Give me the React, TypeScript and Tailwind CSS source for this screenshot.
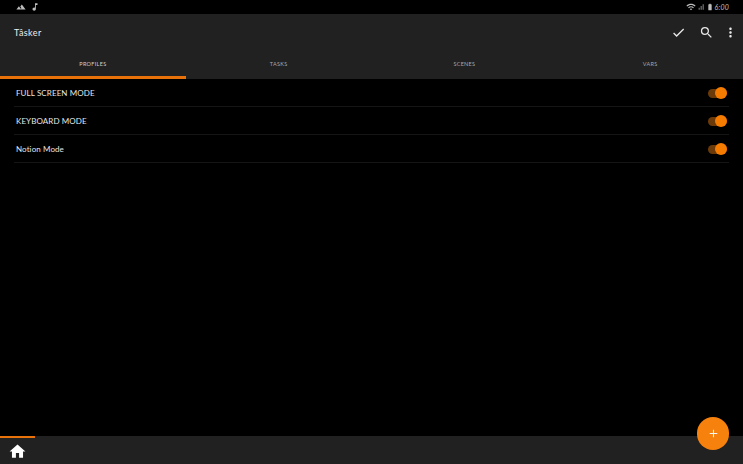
import React from 'react';
import { MdCheck, MdSearch, MdMoreVert, MdHome, MdAdd, MdWifi, MdSignalCellularAlt, MdBatteryFull, MdLandscape, MdMusicNote } from 'react-icons/md';

const font = "font-['Lato','Noto_Sans',sans-serif]";

const tabs = ['PROFILES', 'TASKS', 'SCENES', 'VARS'];
const profiles = ['FULL SCREEN MODE', 'KEYBOARD MODE', 'Notion Mode'];

const Toggle = () => (
  <div className="relative w-[19px] h-[9px] mt-[2px] rounded-full bg-[#6b3a08]">
    <div className="absolute right-0 top-[-2px] w-[12px] h-[12px] rounded-full bg-[#f57c00]" />
  </div>
);

const App: React.FC = () => {
  return (
    <div className={`relative flex flex-col w-[743px] h-[464px] overflow-hidden bg-black ${font}`}>
      {/* status bar */}
      <div className="h-[14px] shrink-0 flex items-center justify-between pl-[16px] pr-[14px] text-[#bdbdbd]">
        <div className="flex items-center gap-[4px]">
          <MdLandscape size={10} />
          <MdMusicNote size={10} />
        </div>
        <div className="flex items-center gap-[1px]">
          <MdWifi size={10} />
          <MdSignalCellularAlt size={8} className="text-[#8a8a8a]" />
          <MdBatteryFull size={8} />
          <span className="text-[7px] leading-none italic tracking-[0.2px]">6:00</span>
        </div>
      </div>

      {/* toolbar */}
      <div className="h-[36px] shrink-0 bg-[#212121] flex items-center justify-between pl-[14px] pr-[5px]">
        <span className="text-[9px] text-[#eeeeee] tracking-[0.4px] mt-[1px]">Tâsker</span>
        <div className="flex items-center text-[#e8e8e8]">
          <MdCheck size={15} className="mr-[13px]" />
          <MdSearch size={15} className="mr-[9px]" />
          <MdMoreVert size={15} />
        </div>
      </div>

      {/* tabs */}
      <div className="h-[29px] shrink-0 bg-[#212121] grid grid-cols-4">
        {tabs.map((t, i) => (
          <div
            key={t}
            className={`flex items-center justify-center pt-[2px] border-b-[3px] text-[5.5px] tracking-[0.3px] ${
              i === 0 ? 'border-[#e8710a] text-[#cfcfcf]' : 'border-transparent text-[#a8a8a8]'
            }`}
          >
            {t}
          </div>
        ))}
      </div>

      {/* profile list */}
      <div className="flex-1 px-[14px]">
        {profiles.map(p => (
          <div key={p} className="h-[28px] flex items-center justify-between border-b border-[#151515] pl-[2px] pr-[2px]">
            <span className="text-[8px] text-[#e6e6e6] tracking-[0.1px]">{p}</span>
            <Toggle />
          </div>
        ))}
      </div>

      {/* bottom bar */}
      <div className="h-[28px] shrink-0 bg-[#212121]">
        <div className="w-[35px] h-[2px] bg-[#e8710a]" />
        <div className="pl-[8px] pt-[4px]">
          <MdHome size={19} className="text-white" />
        </div>
      </div>

      {/* fab */}
      <div className="absolute left-[697px] top-[417px] w-[32px] h-[33px] rounded-full bg-[#f7810d] flex items-center justify-center text-[#f5f5f5]">
        <MdAdd size={13} />
      </div>
    </div>
  );
};

export default App;
